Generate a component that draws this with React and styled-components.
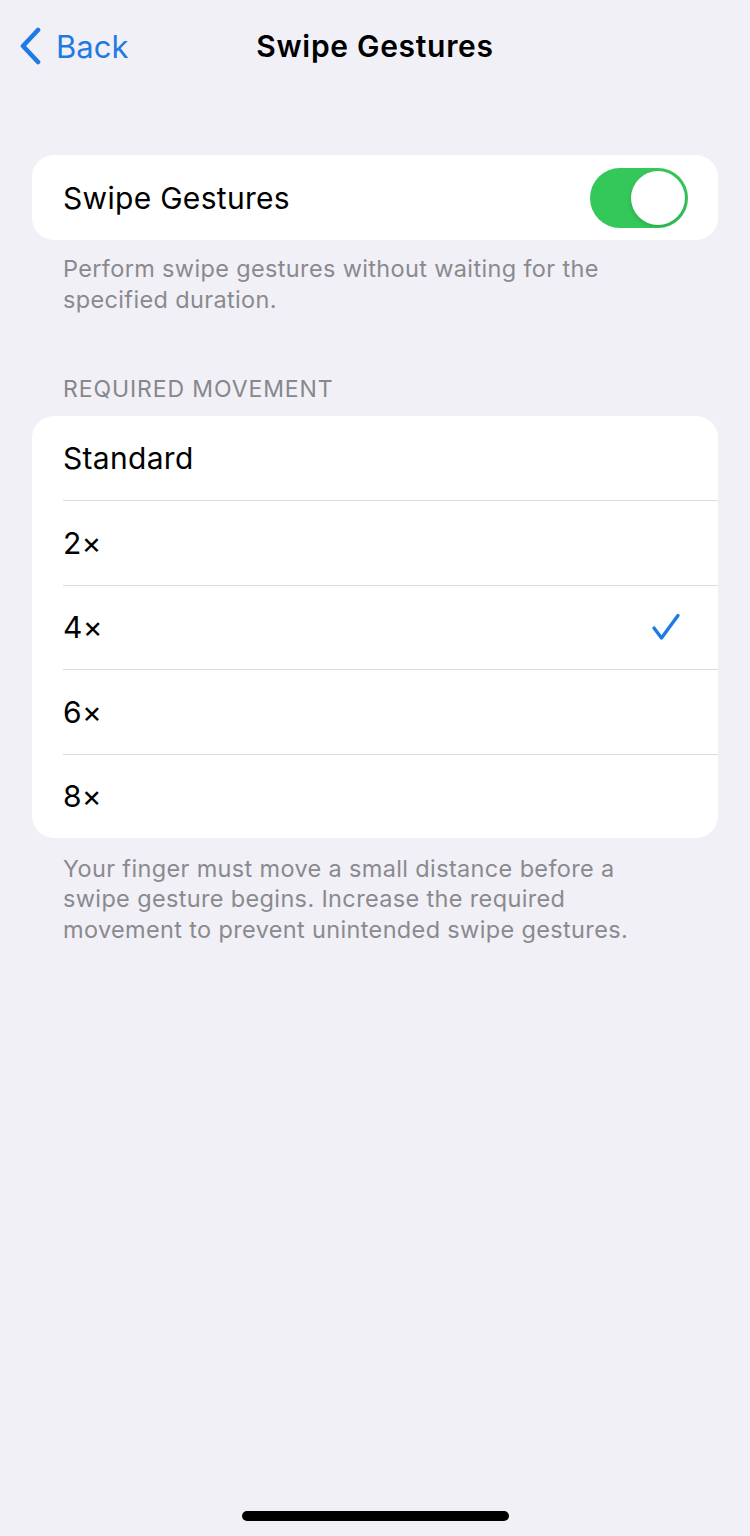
import React from "react";
import styled, { createGlobalStyle } from "styled-components";

const Global = createGlobalStyle`
  html, body { margin: 0; padding: 0; background: #f1f0f6; }
  body { font-family: Inter, "Noto Sans", "Liberation Sans", sans-serif; -webkit-font-smoothing: antialiased; }
  * { box-sizing: border-box; }
`;

const Page = styled.div`
  width: 750px;
  min-height: 1536px;
  background: #f1f0f6;
  display: flex;
  flex-direction: column;
`;

const Nav = styled.header`
  height: 92px;
  display: grid;
  grid-template-columns: 1fr auto 1fr;
  align-items: center;
  padding: 0 18px;
`;

const BackButton = styled.div`
  display: flex;
  align-items: center;
  gap: 14px;
  color: #1f7ae3;
  font-size: 31px;
  letter-spacing: 0;
`;

const Title = styled.h1`
  margin: 0;
  font-size: 30px;
  font-weight: 600;
  color: #000;
  letter-spacing: 0.7px;
`;

const Content = styled.main`
  padding: 63px 32px 0;
  display: flex;
  flex-direction: column;
`;

const Card = styled.section`
  background: #fff;
  border-radius: 22px;
  overflow: hidden;
`;

const Row = styled.div`
  position: relative;
  height: ${(p) => p.$h || 84}px;
  display: flex;
  align-items: center;
  justify-content: space-between;
  padding: 0 ${(p) => p.$pr || 30}px 0 31px;
  font-size: 30px;
  color: #000;
  letter-spacing: 0.3px;
  & + & {
    border-top: 1px solid transparent;
  }
  & + &::before {
    content: "";
    position: absolute;
    top: -1px;
    left: 31px;
    right: 0;
    height: 1px;
    background: #dcdce0;
  }
`;

const Footer = styled.p`
  margin: ${(p) => p.$mt}px 0 0;
  padding: 0 36px 0 31px;
  font-size: 23.5px;
  line-height: 30.5px;
  color: #8a8a8e;
  letter-spacing: 0.35px;
`;

const SectionHeader = styled.h2`
  margin: 59px 0 12px;
  padding: 0 31px;
  font-size: 23px;
  line-height: 30px;
  font-weight: 400;
  color: #87878c;
  letter-spacing: 0.9px;
`;

const Toggle = styled.div`
  width: 98px;
  height: 60px;
  border-radius: 30px;
  background: #34c759;
  padding: 3px;
  display: flex;
  justify-content: flex-end;
`;

const Knob = styled.div`
  width: 54px;
  height: 54px;
  border-radius: 50%;
  background: #fff;
  box-shadow: 0 2px 4px rgba(0, 0, 0, 0.15);
`;

const HomeIndicator = styled.div`
  margin: auto auto 15px;
  width: 267px;
  height: 10px;
  border-radius: 5px;
  background: #000;
`;

const Chevron = () => (
  <svg width="24" height="38" viewBox="0 0 24 38" fill="none">
    <path d="M20 3 L5 19 L20 35" stroke="#1f7ae3" strokeWidth="4.6" strokeLinecap="round" strokeLinejoin="round" />
  </svg>
);

const Check = () => (
  <svg width="30" height="28" viewBox="0 0 30 28" fill="none">
    <path d="M3 15 L10.5 25 L27 2.5" stroke="#1f7ae3" strokeWidth="3.4" strokeLinecap="round" strokeLinejoin="round" />
  </svg>
);

const options = ["Standard", "2×", "4×", "6×", "8×"];

export default function App() {
  return (
    <Page>
      <Global />
      <Nav>
        <BackButton>
          <Chevron />
          <span>Back</span>
        </BackButton>
        <Title>Swipe Gestures</Title>
        <div />
      </Nav>
      <Content>
        <Card>
          <Row $h={85}>
            <span>Swipe Gestures</span>
            <Toggle>
              <Knob />
            </Toggle>
          </Row>
        </Card>
        <Footer $mt={14}>
          Perform swipe gestures without waiting for the specified duration.
        </Footer>
        <SectionHeader>REQUIRED MOVEMENT</SectionHeader>
        <Card>
          {options.map((o) => (
            <Row key={o} $h={84.4} $pr={37}>
              <span>{o}</span>
              {o === "4×" && <Check />}
            </Row>
          ))}
        </Card>
        <Footer $mt={16}>
          Your finger must move a small distance before a swipe gesture begins. Increase the required movement to prevent unintended swipe gestures.
        </Footer>
      </Content>
      <HomeIndicator />
    </Page>
  );
}
